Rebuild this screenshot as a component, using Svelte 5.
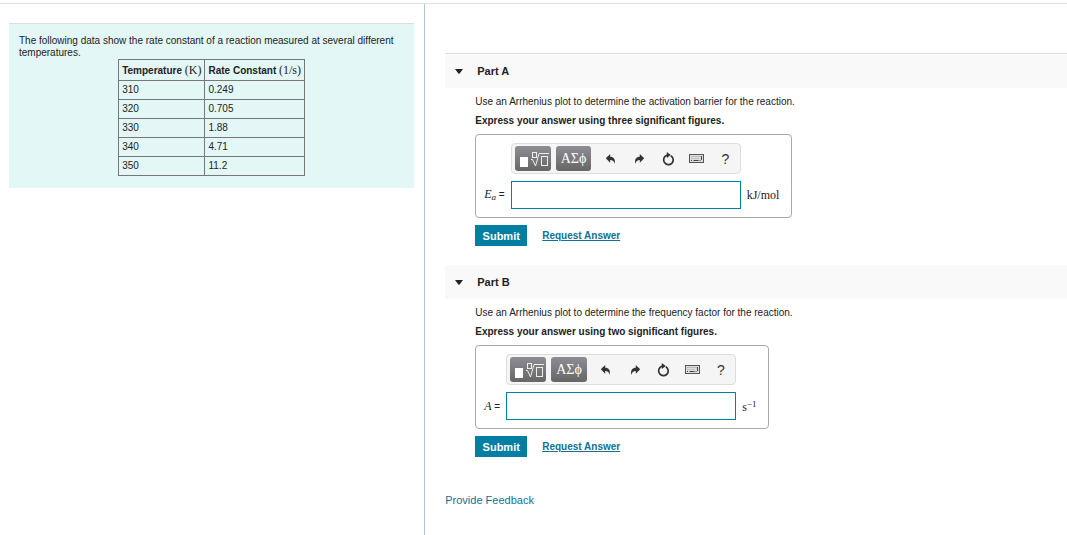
<script lang="ts">
    // --- Problem data ---
    const rows = [
        { temperature: '310', rate: '0.249' },
        { temperature: '320', rate: '0.705' },
        { temperature: '330', rate: '1.88' },
        { temperature: '340', rate: '4.71' },
        { temperature: '350', rate: '11.2' }
    ];

    const parts = [
        {
            id: 'a',
            title: 'Part A',
            question: 'Use an Arrhenius plot to determine the activation barrier for the reaction.',
            hint: 'Express your answer using three significant figures.',
            symbol: 'E',
            sub: 'a',
            unit: 'kJ/mol',
            sup: ''
        },
        {
            id: 'b',
            title: 'Part B',
            question: 'Use an Arrhenius plot to determine the frequency factor for the reaction.',
            hint: 'Express your answer using two significant figures.',
            symbol: 'A',
            sub: '',
            unit: 's',
            sup: '−1'
        }
    ];

    // --- State ---
    let answers: Record<string, string> = $state({ a: '', b: '' });
    let open: Record<string, boolean> = $state({ a: true, b: true });
</script>

<div class="page">
    <aside class="problem">
        <div class="intro">
            <p>The following data show the rate constant of a reaction measured at several different temperatures.</p>
            <table>
                <thead>
                    <tr>
                        <th>Temperature <span class="math">(K)</span></th>
                        <th>Rate Constant <span class="math">(1/s)</span></th>
                    </tr>
                </thead>
                <tbody>
                    {#each rows as row}
                        <tr>
                            <td>{row.temperature}</td>
                            <td>{row.rate}</td>
                        </tr>
                    {/each}
                </tbody>
            </table>
        </div>
    </aside>

    <main class="work">
        {#each parts as part (part.id)}
            <section class="part">
                <h2>
                    <button class="toggle" aria-expanded={open[part.id]} onclick={() => (open[part.id] = !open[part.id])}>
                        <svg width="8" height="5" viewBox="0 0 8 5"><path d="M0 0h8L4.6 4.4a.8.8 0 0 1-1.2 0z" fill="#222" /></svg>
                        {part.title}
                    </button>
                </h2>

                {#if open[part.id]}
                    <div class="part-body">
                        <p>{part.question}</p>
                        <p class="hint">{part.hint}</p>

                        <div class="answer-box">
                            <div class="toolbar">
                                <button class="dark" aria-label="Templates">
                                    <svg width="36" height="24" viewBox="0 0 36 24" fill="none" stroke="#eee">
                                        <rect x="5" y="10" width="8" height="10" fill="#fff" stroke="none" />
                                        <rect x="17.5" y="5.5" width="4" height="5" />
                                        <path d="M16 12.5h1.5l3 6.5 3.5-12.5h10" />
                                        <rect x="26.5" y="9.500" width="6" height="9" />
                                    </svg>
                                </button>
                                <button class="dark greek" aria-label="Symbols">ΑΣϕ</button>
                                <button class="icon" aria-label="Undo">
                                    <svg width="12" height="12" viewBox="0 0 12 12"><path d="M5.200 1v2.700c3.300 0 5.500 2.300 4.500 7.300-.5-2.700-2-4-4.500-4v2.800L.8 5.300z" fill="#333" /></svg>
                                </button>
                                <button class="icon" aria-label="Redo">
                                    <svg width="12" height="12" viewBox="0 0 12 12"><path d="M6.800 1v2.700C3.500 3.700 1.300 6 2.300 11c.5-2.700 2-4 4.500-4v2.800l4.400-4.500z" fill="#333" /></svg>
                                </button>
                                <button class="icon" aria-label="Reset">
                                    <svg width="14" height="14" viewBox="0 0 14 14">
                                        <path d="M9.800 3.700A4.800 4.800 0 1 1 6.300 3.200" fill="none" stroke="#333" stroke-width="1.700" />
                                        <path d="M5.800 0l4 3.100-4 2.900z" fill="#333" />
                                    </svg>
                                </button>
                                <button class="icon" aria-label="Keyboard shortcuts">
                                    <svg width="15" height="9" viewBox="0 0 15 9">
                                        <rect x=".5" y=".5" width="14" height="8" fill="#ddd" stroke="#555" />
                                        <path d="M2.500 2.500h10" stroke="#999" stroke-dasharray="1 1" />
                                        <path d="M2.500 4.500h8" stroke="#aaa" stroke-dasharray="1 1" />
                                        <path d="M2 6.500h1M4.500 6.500h5M10.500 6.500h1M12.500 2v4" stroke="#444" />
                                    </svg>
                                </button>
                                <button class="icon help" aria-label="Help">?</button>
                            </div>
                            <label for="answer-{part.id}">
                                <i class="math">{part.symbol}{#if part.sub}<sub>{part.sub}</sub>{/if}</i> =
                            </label>
                            <input id="answer-{part.id}" type="text" bind:value={answers[part.id]} />
                            <span class="unit math">{part.unit}{#if part.sup}<sup>{part.sup}</sup>{/if}</span>
                        </div>

                        <div class="actions">
                            <button class="submit">Submit</button>
                            <a class="request" href="#answer-{part.id}">Request Answer</a>
                        </div>
                    </div>
                {/if}
            </section>
        {/each}

        <a class="feedback" href="#feedback">Provide Feedback</a>
    </main>
</div>

<style>
    :global(body) {
        margin: 0;
        background: #fff;
    }

    .page {
        display: grid;
        grid-template-columns: 33fr 50fr;
        box-sizing: border-box;
        min-height: 100vh;
        margin-top: 3px;
        min-height: calc(100vh - 3px);
        border-top: 1px solid #ddd;
        font: 10px/12px "Liberation Sans", Arial, sans-serif;
        color: #222;
    }

    p {
        margin: 0;
    }

    button {
        padding: 0;
        border: 0;
        background: none;
        font-family: inherit;
        color: inherit;
        cursor: pointer;
    }

    svg {
        display: block;
    }

    .math {
        font-family: "Liberation Serif", "Times New Roman", serif;
        font-size: 12px;
        font-weight: normal;
    }

    /* left column */
    .problem {
        padding: 19px 10px 0 9px;
    }

    .intro {
        padding: 11px 10px 12px;
        border-top: 1px solid #ddd;
        background: #e2f7f6;
    }

    table {
        margin: 0 auto;
        border: 1px solid #222;
        border-collapse: collapse;
    }

    th,
    td {
        height: 18px;
        padding: 0 3px;
        border: 1px solid #777;
        text-align: left;
    }

    th {
        height: 20px;
        white-space: nowrap;
    }

    /* right column */
    .work {
        padding: 49px 0 24px 20px;
        border-left: 1px solid #b4c3d6;
    }

    .part {
        margin-bottom: 19px;
    }

    .part:first-child h2 {
        border-top: 1px solid #ddd;
    }

    h2 {
        margin: 0;
        background: #f9f9f9;
    }

    .toggle {
        display: flex;
        align-items: center;
        gap: 14px;
        width: 100%;
        height: 34px;
        padding-left: 10px;
        font-size: 11px;
        font-weight: bold;
    }

    .part-body {
        padding: 8px 0 0 30px;
    }

    .hint {
        margin: 7px 0;
        font-weight: bold;
    }

    .answer-box {
        display: inline-grid;
        grid-template-columns: auto 230px auto;
        column-gap: 6px;
        row-gap: 7px;
        align-items: center;
        padding: 8px 12px 8px 8px;
        border: 1px solid #aaa;
        border-radius: 4px;
        vertical-align: top;
    }

    .toolbar {
        grid-column: 2;
        display: flex;
        align-items: center;
        box-sizing: border-box;
        height: 31px;
        padding-left: 3px;
        border: 1px solid #ddd;
        border-radius: 4px;
        background: #f5f5f5;
    }

    .dark {
        width: 36px;
        height: 25px;
        margin-right: 5px;
        border-radius: 3px;
        background: linear-gradient(#8f8d94, #666);
        color: #fff;
    }

    .greek {
        font: 14px/24px "Liberation Serif", "Times New Roman", serif;
    }

    .icon {
        display: flex;
        align-items: center;
        justify-content: center;
        width: 29px;
        height: 25px;
    }

    .help {
        font-size: 14px;
        color: #333;
    }

    label {
        grid-column: 1;
        white-space: nowrap;
    }

    sub,
    sup {
        font-size: 9px;
        line-height: 1;
    }

    sub {
        vertical-align: -2px;
    }

    sup {
        vertical-align: 4px;
    }

    input {
        box-sizing: border-box;
        width: 230px;
        height: 28px;
        padding: 0 6px;
        border: 1px solid #007fa3;
        background: #fff;
        font: inherit;
    }

    .actions {
        display: flex;
        align-items: center;
        gap: 15px;
        margin-top: 7px;
    }

    .submit {
        width: 52px;
        height: 21px;
        background: #007fa3;
        color: #fff;
        font-size: 11px;
        font-weight: bold;
    }

    .request {
        color: #0f7296;
        font-weight: bold;
    }

    .feedback {
        display: inline-block;
        margin-top: 18px;
        color: #0f7296;
        font-size: 11px;
        text-decoration: none;
    }
</style>
